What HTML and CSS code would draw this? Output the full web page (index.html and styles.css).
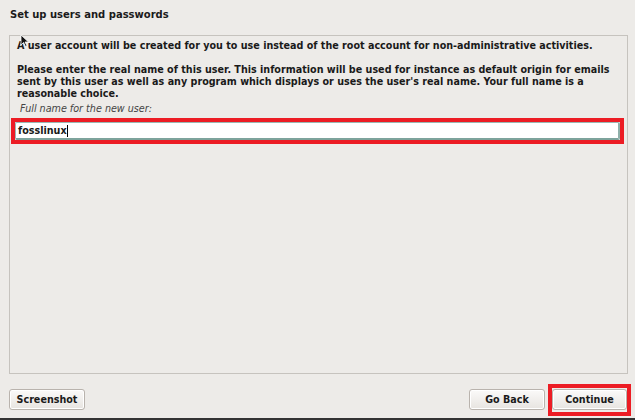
FILE: index.html
```html
<!DOCTYPE html>
<html>
<head>
<meta charset="utf-8">
<link rel="stylesheet" href="styles.css">
</head>
<body>
<div class="screen">
  <div class="title">Set up users and passwords</div>
  <div class="panel">
    <p class="intro">A user account will be created for you to use instead of the root account for non-administrative activities.</p>
    <p class="desc">Please enter the real name of this user. This information will be used for instance as default origin for emails sent by this user as well as any program which displays or uses the user's real name. Your full name is a reasonable choice.</p>
    <div class="label">Full name for the new user:</div>
    <div class="highlight">
      <div class="entry"><span class="value">fosslinux</span><span class="caret"></span></div>
    </div>
  </div>
  <div class="footer">
    <button class="btn">Screenshot</button>
    <div class="spacer"></div>
    <button class="btn back">Go Back</button>
    <div class="highlight-btn"><button class="btn cont">Continue</button></div>
  </div>
  <div class="bottom-bar"></div>
  <svg class="cursor" width="10" height="14" viewBox="0 0 10 14"><path d="M1 1 L1 11 L3.5 8.5 L5.5 12.5 L7 11.8 L5 8 L8.5 8 Z" fill="#111" stroke="#fff" stroke-width="0.8"/></svg>
</div>
</body>
</html>
```
FILE: styles.css
```css
html, body {
  margin: 0;
  padding: 0;
}
body {
  background: #edebe8;
  font-family: "DejaVu Sans", "Liberation Sans", sans-serif;
  color: #1a1a1a;
}
.screen {
  position: relative;
  width: 635px;
  height: 420px;
  display: flex;
  flex-direction: column;
  overflow: hidden;
}
.title {
  font-weight: bold;
  font-size: 10px;
  line-height: 12px;
  padding: 9px 0 0 10px;
  height: 26px;
  box-sizing: border-box;
  flex: none;
}
.panel {
  margin: 9px 7px 0 9px;
  height: 339px;
  flex: none;
  box-sizing: border-box;
  border: 1px solid #c6c3be;
  padding: 4px 0 0 0;
}
.intro, .desc {
  margin: 0;
  padding: 0 8px 0 7px;
  font-weight: bold;
  font-size: 9.6px;
  line-height: 12px;
}
.desc {
  margin-top: 12px;
}
.label {
  font-style: italic;
  font-size: 9.6px;
  line-height: 12px;
  color: #444;
  padding: 3px 0 0 10px;
}
.highlight {
  margin: 3px 3px 0 1px;
  border: 4px solid #ec1c24;
  height: 26px;
  box-sizing: border-box;
  padding: 0;
}
.entry {
  height: 18px;
  box-sizing: border-box;
  background: #fff;
  border: 1px solid #9ab9b4;
  border-bottom: 2px solid #7ea39c;
  border-right: 2px solid #8fb0aa;
  border-radius: 2px;
  display: flex;
  align-items: center;
  padding-left: 2px;
  font-weight: bold;
  font-size: 9.6px;
}
.caret {
  display: inline-block;
  width: 1px;
  height: 12px;
  background: #000;
}
.footer {
  display: flex;
  align-items: center;
  padding: 7px 4px 0 9px;
  height: 44px;
  flex: none;
  box-sizing: border-box;
}
.spacer {
  flex: 1;
}
.btn {
  font-family: "DejaVu Sans", "Liberation Sans", sans-serif;
  font-weight: bold;
  font-size: 9.6px;
  color: #1a1a1a;
  height: 21px;
  width: 76px;
  padding: 0;
  border: 1px solid #b9b3ad;
  border-radius: 3px;
  background: linear-gradient(#fbfaf9, #e7e4e0);
  box-shadow: inset 0 0 0 1px #fff;
}
.btn.back {
  width: 76px;
  margin-right: 3px;
}
.highlight-btn {
  border: 4px solid #ec1c24;
  padding: 1px 0;
  height: 32px;
  box-sizing: border-box;
  display: flex;
  align-items: center;
}
.btn.cont {
  width: 75px;
}
.bottom-bar {
  height: 2px;
  flex: none;
  background: #333;
}
.cursor {
  position: absolute;
  left: 20px;
  top: 34px;
}
```
